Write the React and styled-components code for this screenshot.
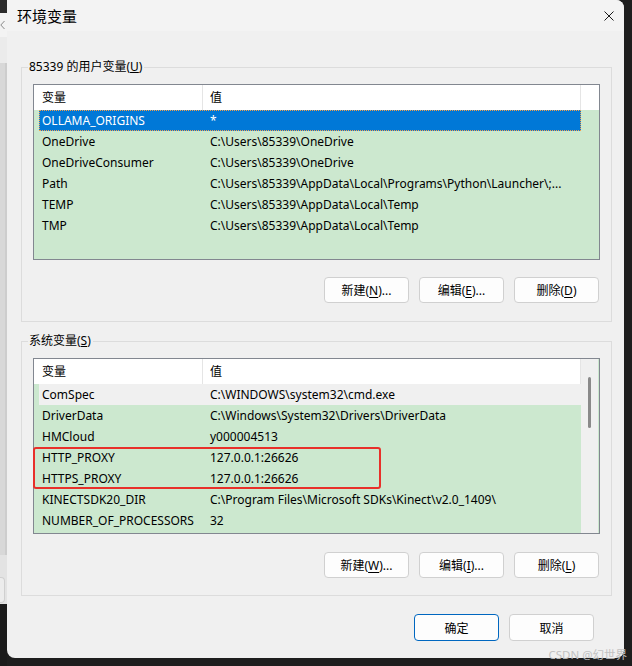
import React from "react";
import styled, { createGlobalStyle } from "styled-components";

const GlobalStyle = createGlobalStyle`
  html, body {
    margin: 0;
    padding: 0;
    background: #1e1e1e;
  }
  body {
    font-family: "Noto Sans", "Noto Sans CJK SC", sans-serif;
    font-size: 12px;
    color: #000;
  }
  * {
    box-sizing: border-box;
  }
`;

const Screen = styled.div`
  position: relative;
  display: flex;
  width: 632px;
  height: 666px;
  background: #1e1e1e;
  overflow: hidden;
`;

// window of another app peeking out at the left
const LeftStrip = styled.div`
  width: 7px;
  flex: none;
  display: flex;
  flex-direction: column;
`;

const StripPiece = styled.div`
  height: ${({ $h }) => ($h ? `${$h}px` : "auto")};
  flex: ${({ $h }) => ($h ? "none" : "1")};
  background: ${({ $bg }) => $bg};
  border-right: ${({ $edge }) => ($edge ? `2px solid ${$edge}` : "none")};
  display: flex;
  align-items: center;
`;

const StripBox = styled.div`
  margin-top: 20px;
  height: 26px;
  width: 5px;
  background: #ececec;
  border-radius: 0 4px 4px 0;
  border: 1px solid #cfcfcf;
  border-left: none;
`;

const Window = styled.div`
  width: 617px;
  height: 658px;
  flex: none;
  display: flex;
  flex-direction: column;
  background: #f0f0f0;
  border-radius: 0 8px 8px 8px;
  overflow: hidden;
`;

const TitleBar = styled.div`
  height: 31px;
  flex: none;
  display: flex;
  align-items: center;
  justify-content: space-between;
  padding: 0 10px;
  background: #f3f3f3;
`;

const Title = styled.span`
  font-family: "Noto Sans CJK SC", sans-serif;
  font-size: 15px;
  line-height: 31px;
`;

const Body = styled.div`
  display: flex;
  flex-direction: column;
  padding: 28px 12px 0 14px;
`;

const Group = styled.section`
  display: flex;
  flex-direction: column;
  margin-top: ${({ $top }) => $top || 0}px;
`;

const GroupHead = styled.div`
  display: flex;
  height: 16px;
  align-items: center;
`;

const Corner = styled.div`
  align-self: flex-end;
  width: 7px;
  height: 8px;
  border-top: 1px solid #dcdcdc;
  border-left: 1px solid #dcdcdc;
`;

const GroupLabel = styled.span`
  padding: 0 2px 0 1px;
  line-height: 16px;
  white-space: nowrap;
`;

const HeadLine = styled.div`
  align-self: flex-end;
  flex: 1;
  height: 8px;
  border-top: 1px solid #dcdcdc;
  border-right: 1px solid #dcdcdc;
`;

const GroupBody = styled.div`
  padding: 9px 11px ${({ $bottom }) => $bottom}px 11px;
  border: 1px solid #dcdcdc;
  border-top: none;
`;

const ListBox = styled.div`
  position: relative;
  display: flex;
  height: 176px;
  border: 1px solid #828790;
  background: #cce8cf;
`;

const ListMain = styled.div`
  flex: 1;
  min-width: 0;
  display: flex;
  flex-direction: column;
`;

const HeaderRow = styled.div`
  display: flex;
  height: 25px;
  flex: none;
  background: #fff;
`;

const HeadCell = styled.div`
  width: ${({ $w }) => $w}px;
  flex: none;
  padding-left: ${({ $pad }) => $pad}px;
  line-height: 25px;
  border-right: 1px solid #e5e5e5;
`;

const HeadFill = styled.div`
  flex: 1;
`;

const rowBg = { active: "#0078d7", inactive: "#f0f0f0" };

const Row = styled.div`
  display: flex;
  width: 542px;
  height: 21px;
  flex: none;
  margin-left: 5px;
  line-height: 21px;
  background: ${({ $state }) => rowBg[$state] || "transparent"};
  color: ${({ $state }) => ($state === "active" ? "#fff" : "#000")};
  outline: ${({ $state }) => ($state === "active" ? "1px dotted #f5a04a" : "none")};
  outline-offset: -1px;
`;

const NameCell = styled.div`
  width: 164px;
  flex: none;
  padding-left: 3px;
  overflow: hidden;
  white-space: nowrap;
`;

const ValueCell = styled.div`
  flex: 1;
  min-width: 0;
  padding-left: 7px;
  overflow: hidden;
  white-space: nowrap;
`;

const ScrollTrack = styled.div`
  width: 17px;
  flex: none;
  margin-right: 1px;
  padding-top: 18px;
  display: flex;
  justify-content: center;
  background: #f0f0f0;
`;

const Thumb = styled.div`
  width: 3px;
  height: 51px;
  border-radius: 2px;
  background: #8a8a8a;
`;

const Mark = styled.div`
  position: absolute;
  left: -1px;
  top: 88px;
  width: 348px;
  height: 42px;
  border: 2px solid #e8302a;
  border-radius: 3px;
  pointer-events: none;
`;

const ButtonRow = styled.div`
  display: flex;
  justify-content: flex-end;
  gap: 10px;
  margin-top: ${({ $top }) => $top}px;
  padding-right: ${({ $right }) => $right || 0}px;
`;

const Button = styled.button`
  width: 85px;
  height: ${({ $h }) => $h || 26}px;
  padding: 0;
  font-family: "Noto Sans", "Noto Sans CJK SC", sans-serif;
  font-size: 12px;
  color: #000;
  background: #fdfdfd;
  border: 1px solid ${({ $primary }) => ($primary ? "#0067c0" : "#d0d0d0")};
  border-radius: 4px;
  cursor: pointer;
  u {
    text-decoration: underline;
    text-underline-offset: 2px;
  }
`;

const Watermark = styled.span`
  position: absolute;
  right: 5px;
  bottom: 4px;
  font-family: "Noto Sans", "Noto Sans CJK SC", sans-serif;
  font-size: 11.5px;
  color: #c2c2c2;
  white-space: nowrap;
`;

const userVars = [
  ["OLLAMA_ORIGINS", "*"],
  ["OneDrive", "C:\\Users\\85339\\OneDrive"],
  ["OneDriveConsumer", "C:\\Users\\85339\\OneDrive"],
  ["Path", "C:\\Users\\85339\\AppData\\Local\\Programs\\Python\\Launcher\\;..."],
  ["TEMP", "C:\\Users\\85339\\AppData\\Local\\Temp"],
  ["TMP", "C:\\Users\\85339\\AppData\\Local\\Temp"],
];

const systemVars = [
  ["ComSpec", "C:\\WINDOWS\\system32\\cmd.exe"],
  ["DriverData", "C:\\Windows\\System32\\Drivers\\DriverData"],
  ["HMCloud", "y000004513"],
  ["HTTP_PROXY", "127.0.0.1:26626"],
  ["HTTPS_PROXY", "127.0.0.1:26626"],
  ["KINECTSDK20_DIR", "C:\\Program Files\\Microsoft SDKs\\Kinect\\v2.0_1409\\"],
  ["NUMBER_OF_PROCESSORS", "32"],
];

const CloseIcon = () => (
  <svg width="10" height="10" viewBox="0 0 10 10">
    <path d="M0.5 0.5 L9.5 9.5 M9.5 0.5 L0.5 9.5" stroke="#1a1a1a" strokeWidth="1" fill="none" />
  </svg>
);

const Chevron = () => (
  <svg width="6" height="10" viewBox="0 0 6 10">
    <path d="M4.5 1 L0.8 5 L4.5 9" stroke="#8a8a8a" strokeWidth="1" fill="none" />
  </svg>
);

const VarList = ({ rows, selected, focused, scroll, children }) => (
  <ListBox>
    <ListMain>
      <HeaderRow>
        <HeadCell $w={169} $pad={8}>变量</HeadCell>
        <HeadCell $w={378} $pad={7}>值</HeadCell>
        <HeadFill />
      </HeaderRow>
      {rows.map(([name, value], i) => (
        <Row key={name} $state={i === selected ? (focused ? "active" : "inactive") : ""}>
          <NameCell>{name}</NameCell>
          <ValueCell>{value}</ValueCell>
        </Row>
      ))}
    </ListMain>
    {scroll && (
      <ScrollTrack>
        <Thumb />
      </ScrollTrack>
    )}
    {children}
  </ListBox>
);

const VarGroup = ({ label, top, bottom, btnTop, keys, ...list }) => (
  <Group $top={top}>
    <GroupHead>
      <Corner />
      <GroupLabel>{label}</GroupLabel>
      <HeadLine />
    </GroupHead>
    <GroupBody $bottom={bottom}>
      <VarList {...list} />
      <ButtonRow $top={btnTop} $right={1}>
        <Button>新建(<u>{keys[0]}</u>)...</Button>
        <Button>编辑(<u>{keys[1]}</u>)...</Button>
        <Button>删除(<u>{keys[2]}</u>)</Button>
      </ButtonRow>
    </GroupBody>
  </Group>
);

export default function App() {
  return (
    <>
      <GlobalStyle />
      <Screen>
        <LeftStrip>
          <StripPiece $h={13} $bg="#2b2b2b" />
          <StripPiece $h={24} $bg="#f3f3f3">
            <Chevron />
          </StripPiece>
          <StripPiece $h={26} $bg="#ebebeb" />
          <StripPiece $h={492} $bg="#d8d8d8" $edge="#cdcdcd" />
          <StripPiece $h={49} $bg="#e3e3e3">
            <StripBox />
          </StripPiece>
          <StripPiece $bg="#1b1b1b" />
        </LeftStrip>

        <Window>
          <TitleBar>
            <Title>环境变量</Title>
            <CloseIcon />
          </TitleBar>
          <Body>
            <VarGroup
              label={<>85339 的用户变量(<u>U</u>)</>}
              rows={userVars}
              selected={0}
              focused
              bottom={18}
              btnTop={17}
              keys={["N", "E", "D"]}
            />
            <VarGroup
              label={<>系统变量(<u>S</u>)</>}
              rows={systemVars}
              selected={0}
              scroll
              top={11}
              bottom={17}
              btnTop={18}
              keys={["W", "I", "L"]}
            >
              <Mark />
            </VarGroup>
            <ButtonRow $top={18} $right={18}>
              <Button $primary $h={27}>确定</Button>
              <Button $h={27}>取消</Button>
            </ButtonRow>
          </Body>
        </Window>

        <Watermark>CSDN @幻世界</Watermark>
      </Screen>
    </>
  );
}
